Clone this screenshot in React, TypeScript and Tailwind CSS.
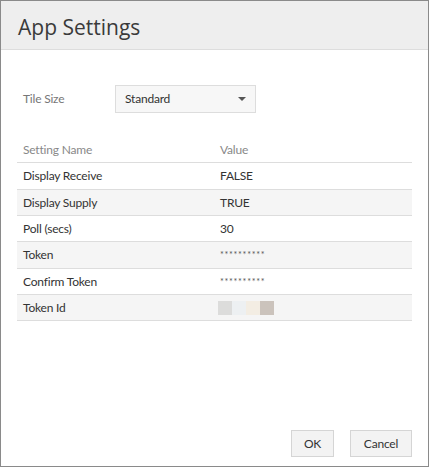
const stars = <span className="text-[9px] tracking-[0.7px] text-[#555]">**********</span>;

const rows: { name: string; value: React.ReactNode; h: string }[] = [
  { name: "Display Receive", value: "FALSE", h: "h-[27px]" },
  { name: "Display Supply", value: "TRUE", h: "h-[26px]" },
  { name: "Poll (secs)", value: "30", h: "h-[26px]" },
  { name: "Token", value: stars, h: "h-[27px]" },
  { name: "Confirm Token", value: stars, h: "h-[26px]" },
  {
    name: "Token Id",
    value: (
      <span className="-ml-[2px] flex">
        <span className="h-[14px] w-[14px] bg-[#dcdcdb]" />
        <span className="h-[14px] w-[14px] bg-[#edf0f2]" />
        <span className="h-[14px] w-[14px] bg-[#f3ede3]" />
        <span className="h-[14px] w-[14px] bg-[#cbc3bc]" />
      </span>
    ),
    h: "h-[26px]",
  },
];

export default function App() {
  return (
    <div
      className="flex h-[467px] w-[429px] flex-col border border-[#8a8a8a] bg-white text-[12px] tracking-[-0.2px] text-[#333]"
      style={{ fontFamily: 'Lato, "Open Sans", sans-serif' }}
    >
      <div className="flex h-[49px] shrink-0 items-end border-b border-[#dddddd] bg-[#eeeeee] pb-[8px] pl-[17px]">
        <h1
          className="text-[21px] font-normal leading-[28px] tracking-normal text-[#3a3a3a]"
          style={{ fontFamily: '"Open Sans", sans-serif' }}
        >
          App Settings
        </h1>
      </div>

      <div className="flex flex-1 flex-col px-[16px]">
        <div className="mt-[35px] flex items-center">
          <span className="w-[98px] pl-[6px] text-[#777]">Tile Size</span>
          <div className="flex h-[28px] w-[141px] items-center justify-between border border-[#dddddd] bg-[#f7f7f7] pl-[9px] pr-[9px] text-[#333]">
            <span>Standard</span>
            <span className="h-0 w-0 border-x-[4px] border-t-[4px] border-x-transparent border-t-[#555]" />
          </div>
        </div>

        <div className="mt-[24px]">
          <div className="flex h-[26px] items-center border-b border-[#dddddd] text-[#888]">
            <span className="w-[203px] pl-[6px]">Setting Name</span>
            <span>Value</span>
          </div>
          {rows.map((r, i) => (
            <div
              key={r.name}
              className={`flex items-center border-b border-[#dddddd] text-[#333] ${r.h} ${i % 2 === 1 ? "bg-[#f5f5f5]" : "bg-white"}`}
            >
              <span className="w-[203px] pl-[6px]">{r.name}</span>
              <span className="flex items-center">{r.value}</span>
            </div>
          ))}
        </div>

        <div className="mt-auto mb-[9px] flex justify-end gap-[16px]">
          <button className="h-[27px] w-[43px] border border-[#d5d5d5] bg-[#f3f3f3] text-[#333]">OK</button>
          <button className="h-[27px] w-[62px] border border-[#d5d5d5] bg-[#f3f3f3] text-[#333]">Cancel</button>
        </div>
      </div>
    </div>
  );
}
